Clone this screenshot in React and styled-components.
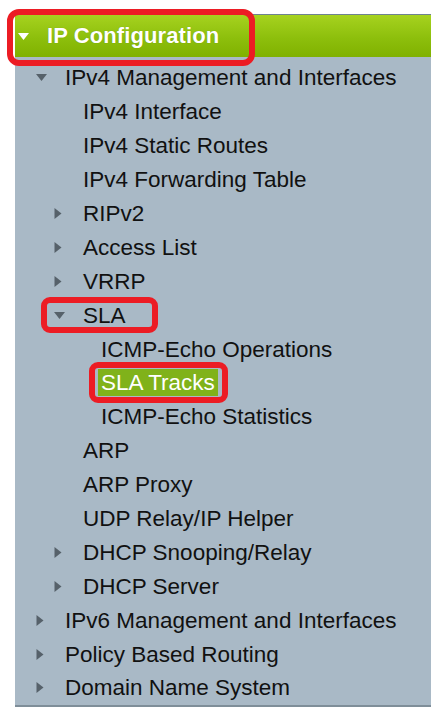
import styled, { createGlobalStyle } from "styled-components";

const GlobalStyle = createGlobalStyle`
  html, body {
    margin: 0;
    padding: 0;
    background: #ffffff;
  }
  body {
    font-family: "Liberation Sans", Arial, Helvetica, sans-serif;
  }
`;

const tree = [
  { level: 1, label: "IPv4 Management and Interfaces", caret: "down" },
  { level: 2, label: "IPv4 Interface" },
  { level: 2, label: "IPv4 Static Routes" },
  { level: 2, label: "IPv4 Forwarding Table" },
  { level: 2, label: "RIPv2", caret: "right" },
  { level: 2, label: "Access List", caret: "right" },
  { level: 2, label: "VRRP", caret: "right" },
  { level: 2, label: "SLA", caret: "down", callout: true },
  { level: 3, label: "ICMP-Echo Operations" },
  { level: 3, label: "SLA Tracks", active: true },
  { level: 3, label: "ICMP-Echo Statistics" },
  { level: 2, label: "ARP" },
  { level: 2, label: "ARP Proxy" },
  { level: 2, label: "UDP Relay/IP Helper" },
  { level: 2, label: "DHCP Snooping/Relay", caret: "right" },
  { level: 2, label: "DHCP Server", caret: "right" },
  { level: 1, label: "IPv6 Management and Interfaces", caret: "right" },
  { level: 1, label: "Policy Based Routing", caret: "right" },
  { level: 1, label: "Domain Name System", caret: "right" },
];

const indents = { 1: 21, 2: 39, 3: 57 };

const Caret = ({ dir, color = "#56616a" }) => (
  <CaretSlot>
    {dir === "down" && (
      <svg width="11" height="7" viewBox="0 0 11 7">
        <polygon points="0,0 11,0 5.5,7" fill={color} />
      </svg>
    )}
    {dir === "right" && (
      <svg width="8" height="11" viewBox="0 0 8 11">
        <polygon points="0.5,0 7.5,5.5 0.5,11" fill={color} />
      </svg>
    )}
  </CaretSlot>
);

const App = () => {
  return (
    <>
      <GlobalStyle />
      <Page>
        <Panel>
          <Header>
            <Caret dir="down" color="#ffffff" />
            <HeaderTitle>IP Configuration</HeaderTitle>
            <Callout $left={-8} $top={-6} $width={248} $height={57} $radius={12} />
          </Header>
          <List>
            {tree.map((item) => (
              <Row key={item.label} $indent={indents[item.level]}>
                <Caret dir={item.caret} />
                <Label $active={item.active}>
                  {item.label}
                  {item.active && (
                    <Callout $left={-9} $top={-7} $width={139} $height={41} $radius={9} />
                  )}
                </Label>
                {item.callout && (
                  <Callout $left={26} $top={-1} $width={117} $height={36} $radius={9} />
                )}
              </Row>
            ))}
          </List>
        </Panel>
      </Page>
    </>
  );
};

export default App;

const Page = styled.div`
  width: 442px;
  height: 717px;
  padding: 14px 0 0 15px;
  box-sizing: border-box;
`;

const Panel = styled.nav`
  width: 416px;
  background: #a9b9c6;
  border-bottom: 2px solid #7f8e99;
`;

const Header = styled.div`
  position: relative;
  display: flex;
  align-items: center;
  height: 42px;
  padding-left: 3px;
  border-top: 1px solid #6f8290;
  background: linear-gradient(#a6d21f, #8dbf0c 55%, #80b100);
`;

const HeaderTitle = styled.span`
  margin-left: 3px;
  color: #ffffff;
  font-size: 22px;
  font-weight: 700;
  letter-spacing: 0.1px;
  text-shadow: 0 0 1px rgba(70, 100, 0, 0.4);
`;

const List = styled.ul`
  list-style: none;
  margin: 0;
  padding: 4px 0 0;
`;

const Row = styled.li`
  position: relative;
  display: flex;
  align-items: center;
  height: 33.9px;
  padding-left: ${(p) => p.$indent}px;
`;

const CaretSlot = styled.span`
  display: flex;
  align-items: center;
  width: 26px;
  flex-shrink: 0;
`;

const Label = styled.span`
  position: relative;
  padding: 0 3px;
  line-height: 27px;
  font-size: 22.5px;
  color: ${(p) => (p.$active ? "#ffffff" : "#111111")};
  background: ${(p) => (p.$active ? "#80b21a" : "transparent")};
  white-space: nowrap;
`;

const Callout = styled.span`
  position: absolute;
  left: ${(p) => p.$left}px;
  top: ${(p) => p.$top}px;
  width: ${(p) => p.$width}px;
  height: ${(p) => p.$height}px;
  box-sizing: border-box;
  border: 6px solid #ec1c24;
  border-radius: ${(p) => p.$radius}px;
  pointer-events: none;
`;
